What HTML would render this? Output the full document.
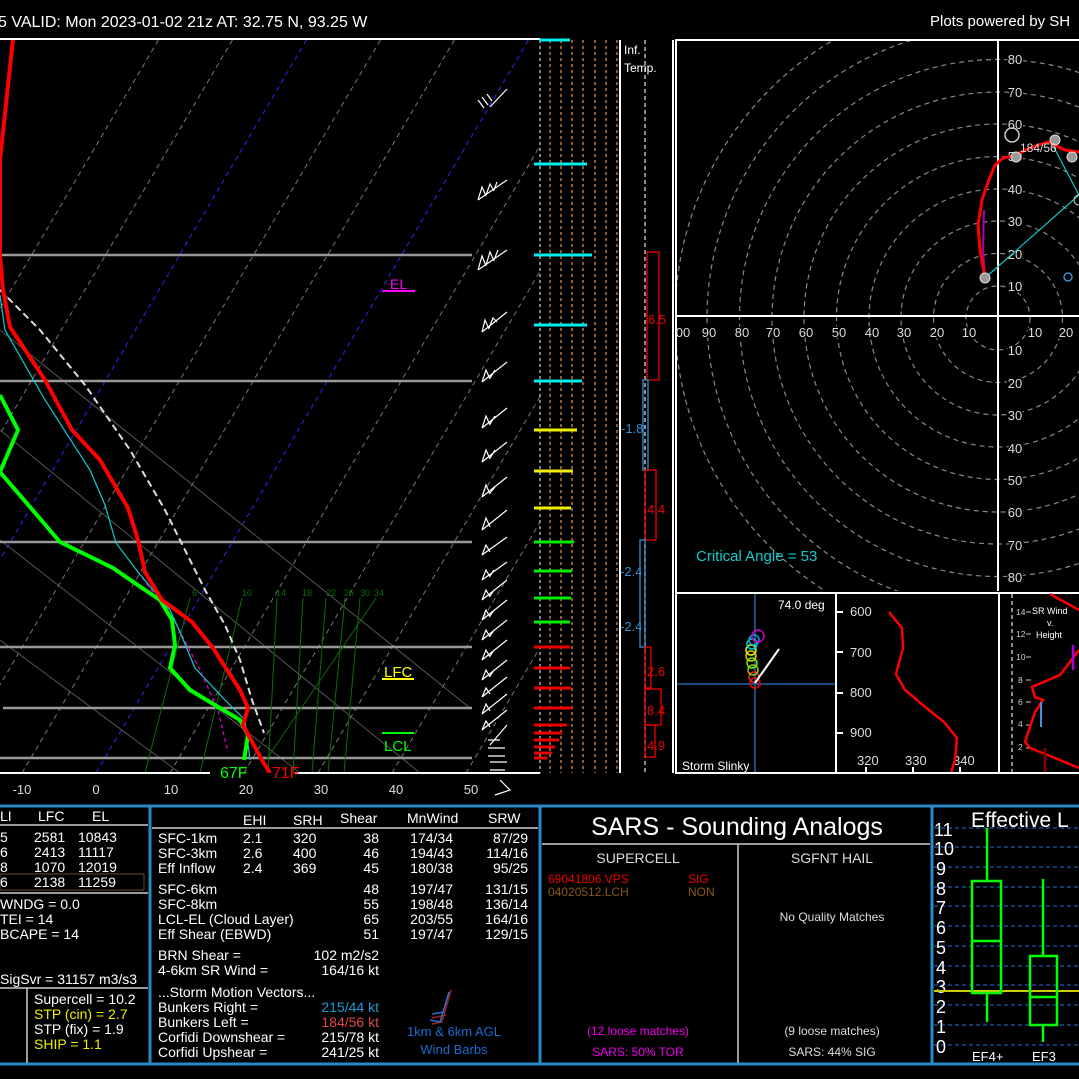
<!DOCTYPE html>
<html><head><meta charset="utf-8"><style>
body{margin:0;background:#000;}
svg{display:block;font-family:"Liberation Sans",sans-serif;}
</style></head><body>
<svg width="1079" height="1079" viewBox="0 0 1079 1079" xmlns="http://www.w3.org/2000/svg">
<rect width="1079" height="1079" fill="#000"/>
<!-- header -->
<text x="-2" y="27" fill="#fff" font-size="16">5  VALID: Mon 2023-01-02 21z  AT: 32.75 N, 93.25 W</text>
<text x="930" y="26" fill="#fff" font-size="15">Plots powered by SH</text>

<!-- SKEW-T -->
<defs><clipPath id="sk"><rect x="0" y="40" width="540" height="733"/></clipPath>
<clipPath id="hd"><rect x="677" y="40" width="402" height="551"/></clipPath></defs>
<g clip-path="url(#sk)">
<g stroke="#777" stroke-width="1" stroke-dasharray="5,4" fill="none">
<line x1="-274" y1="773" x2="159" y2="39"/>
<line x1="-200" y1="773" x2="233" y2="39"/>
<line x1="-52" y1="773" x2="381" y2="39"/>
<line x1="22" y1="773" x2="455" y2="39"/>
<line x1="170" y1="773" x2="603" y2="39"/>
<line x1="244" y1="773" x2="677" y2="39"/>
<line x1="318" y1="773" x2="751" y2="39"/>
<line x1="392" y1="773" x2="825" y2="39"/>
<line x1="466" y1="773" x2="899" y2="39"/>
</g>
<g stroke="#2222cc" stroke-width="1.2" stroke-dasharray="5,4" fill="none">
<line x1="-126" y1="773" x2="307" y2="39"/>
<line x1="96" y1="773" x2="529" y2="39"/>
</g>
<g stroke="#555" stroke-width="1" fill="none">
<line x1="0" y1="430" x2="420" y2="773"/>
<line x1="0" y1="540" x2="300" y2="773"/>
<line x1="0" y1="640" x2="180" y2="773"/>
<line x1="0" y1="330" x2="470" y2="708"/>
</g>
<g stroke="#999" stroke-width="2.5">
<line x1="0" y1="255" x2="472" y2="255"/>
<line x1="0" y1="381" x2="472" y2="381"/>
<line x1="0" y1="542" x2="472" y2="542"/>
<line x1="0" y1="647" x2="472" y2="647"/>
<line x1="3" y1="708" x2="472" y2="708"/>
<line x1="0" y1="758" x2="472" y2="758"/>
</g>
<g stroke="#0c6c0c" stroke-width="1" fill="none">
<line x1="145" y1="773" x2="190" y2="598"/>
<line x1="200" y1="773" x2="242" y2="598"/>
<line x1="268" y1="773" x2="277" y2="598"/>
<line x1="293" y1="773" x2="303" y2="598"/>
<line x1="312" y1="773" x2="326" y2="598"/>
<line x1="328" y1="773" x2="345" y2="598"/>
<line x1="344" y1="773" x2="360" y2="598"/>
<line x1="266" y1="760" x2="376" y2="598"/>
</g>
<g fill="#0c6c0c" font-size="9">
<text x="192" y="596">6</text><text x="242" y="596">10</text><text x="276" y="596">14</text><text x="302" y="596">18</text><text x="326" y="596">22</text><text x="344" y="596">26</text><text x="360" y="596">30</text><text x="374" y="596">34</text>
</g>
<polyline fill="none" stroke="#c0c" stroke-width="1.3" stroke-dasharray="4,3" points="138,572 175,622 200,670 218,710 228,752"/>
<polyline fill="none" stroke="#ddd" stroke-width="2" stroke-dasharray="7,4" points="0,290 40,330 85,385 130,450 165,510 180,540 205,590 225,625 240,660 252,700 264,733"/>
<polyline fill="none" stroke="#1cc" stroke-width="1.2" points="0,295 5,330 45,400 90,470 105,505 116,543 138,572 170,610 180,632 195,668 225,700 245,720 250,760"/>
<polyline fill="none" stroke="#0f0" stroke-width="4" points="0,395 18,430 0,472 60,542 113,568 145,590 160,600 172,620 175,645 170,668 190,690 240,720 248,735 244,760"/>
<polyline fill="none" stroke="#f00" stroke-width="4" points="13,39 0,160 0,255 3,290 10,327 45,380 72,430 100,460 128,508 138,540 145,572 162,600 192,622 213,648 240,690 248,708 243,725 250,738 262,760 270,773"/>
</g>
<line x1="0" y1="39" x2="540" y2="39" stroke="#fff" stroke-width="2"/>
<line x1="0" y1="773" x2="210" y2="773" stroke="#fff" stroke-width="2"/>
<line x1="295" y1="773" x2="540" y2="773" stroke="#fff" stroke-width="2"/>
<text x="220" y="778" fill="#0f0" font-size="16">67F</text>
<text x="272" y="778" fill="#f00" font-size="16">71F</text>
<g fill="#ddd" font-size="13" text-anchor="middle">
<text x="22" y="794">-10</text><text x="96" y="794">0</text><text x="171" y="794">10</text><text x="246" y="794">20</text><text x="321" y="794">30</text><text x="396" y="794">40</text><text x="471" y="794">50</text>
</g>
<line x1="382" y1="291" x2="415" y2="291" stroke="#f0f" stroke-width="2"/><text x="390" y="289" fill="#f0f" font-size="14">EL</text>
<line x1="382" y1="679" x2="414" y2="679" stroke="#ff0" stroke-width="2"/><text x="384" y="677" fill="#ff0" font-size="15">LFC</text>
<line x1="382" y1="733" x2="414" y2="733" stroke="#0f0" stroke-width="2"/><text x="384" y="751" fill="#0f0" font-size="15">LCL</text>
<!-- wind barbs -->
<g stroke="#fff" stroke-width="1.2" fill="none">
<path d="M490,107 L507,89 M478,100 L484,108 M482,97 L488,105 M487,94 L492,101"/>
<path d="M478,200 L507,180 M478,200 L482,187 L486,196 M486,195 L490,184 L494,191 M494,190 L497,182"/>
<path d="M478,270 L507,250 M478,270 L482,256 L486,266 M486,265 L490,252 L494,261 M494,260 L498,250"/>
<path d="M482,332 L507,312 M482,332 L485,320 L489,329 M489,328 L493,318 L497,322"/>
<path d="M482,382 L507,362 M482,382 L486,370 L490,379 M490,378 L495,370"/>
<path d="M482,428 L507,408 M482,428 L486,416 L490,425 M490,424 L495,416"/>
<path d="M482,462 L507,442 M482,462 L486,450 L490,459 M490,458 L495,450"/>
<path d="M482,497 L507,477 M482,497 L486,485 L490,494 M490,493 L495,487"/>
<path d="M482,530 L507,510 M482,530 L486,518 L490,527"/>
<path d="M482,555 L507,537 M482,555 L486,545 L490,552"/>
<path d="M482,580 L507,562 M482,580 L486,570 L490,577 M490,576 L494,570"/>
<path d="M482,600 L507,580 M482,600 L486,590 L490,597 M490,596 L494,590"/>
<path d="M482,620 L507,600 M482,620 L486,610 L490,617 M490,616 L494,610"/>
<path d="M482,640 L507,620 M482,640 L486,630 L490,637 M490,636 L494,630"/>
<path d="M482,660 L507,640 M482,660 L486,650 L490,657 M490,656 L494,650"/>
<path d="M482,680 L507,660 M482,680 L486,670 L490,677 M490,676 L494,670"/>
<path d="M482,697 L507,677 M482,697 L486,688 L490,694"/>
<path d="M482,714 L507,694 M482,714 L486,704 L490,711"/>
<path d="M482,730 L507,710 M482,730 L486,721 L490,727"/>
<path d="M490,745 L507,725 M488,740 L500,740 M488,748 L505,748 M488,756 L505,756 M490,762 L507,762 M490,770 L505,770 M500,780 L510,790 L495,795"/>
</g>

<!-- dotted column -->
<g stroke="#8a5a30" stroke-width="2" stroke-dasharray="3,3">
<line x1="550" y1="40" x2="550" y2="773"/><line x1="561" y1="40" x2="561" y2="773"/><line x1="572" y1="40" x2="572" y2="773"/><line x1="583" y1="40" x2="583" y2="773"/><line x1="595" y1="40" x2="595" y2="773"/><line x1="606" y1="40" x2="606" y2="773"/><line x1="617" y1="40" x2="617" y2="773"/>
</g>
<line x1="540" y1="40" x2="540" y2="773" stroke="#fff" stroke-width="1" stroke-dasharray="3,3"/>
<g stroke-width="3">
<line x1="540" y1="40" x2="570" y2="40" stroke="#0ee"/>
<line x1="534" y1="164" x2="587" y2="164" stroke="#0ee"/>
<line x1="534" y1="255" x2="592" y2="255" stroke="#0ee"/>
<line x1="534" y1="325" x2="587" y2="325" stroke="#0ee"/>
<line x1="534" y1="381" x2="582" y2="381" stroke="#0ee"/>
<line x1="534" y1="430" x2="577" y2="430" stroke="#ee0"/>
<line x1="534" y1="471" x2="573" y2="471" stroke="#ee0"/>
<line x1="534" y1="508" x2="571" y2="508" stroke="#ee0"/>
<line x1="534" y1="542" x2="574" y2="542" stroke="#0e0"/>
<line x1="534" y1="571" x2="572" y2="571" stroke="#0e0"/>
<line x1="534" y1="598" x2="571" y2="598" stroke="#0e0"/>
<line x1="534" y1="622" x2="570" y2="622" stroke="#0e0"/>
<line x1="534" y1="647" x2="570" y2="647" stroke="#e00"/>
<line x1="534" y1="668" x2="570" y2="668" stroke="#e00"/>
<line x1="534" y1="688" x2="571" y2="688" stroke="#e00"/>
<line x1="534" y1="708" x2="572" y2="708" stroke="#e00"/>
<line x1="534" y1="725" x2="567" y2="725" stroke="#e00"/>
<line x1="534" y1="733" x2="562" y2="733" stroke="#e00"/>
<line x1="534" y1="740" x2="559" y2="740" stroke="#e00"/>
<line x1="534" y1="747" x2="555" y2="747" stroke="#e00"/>
<line x1="534" y1="753" x2="552" y2="753" stroke="#e00"/>
<line x1="534" y1="758" x2="547" y2="758" stroke="#e00"/>
</g>
<!-- inf temp -->
<line x1="620" y1="40" x2="620" y2="773" stroke="#fff" stroke-width="2"/>
<line x1="673" y1="40" x2="673" y2="773" stroke="#fff" stroke-width="2"/>
<line x1="645" y1="40" x2="645" y2="773" stroke="#bbb" stroke-width="1.5" stroke-dasharray="4,3"/>
<text x="624" y="54" fill="#fff" font-size="12">Inf.</text><text x="624" y="72" fill="#fff" font-size="12">Temp.</text>
<g fill="none" stroke-width="1.3">
<rect x="647" y="252" width="12" height="128" stroke="#e00"/>
<rect x="643" y="380" width="5" height="90" stroke="#3390d0"/>
<rect x="645" y="470" width="11" height="70" stroke="#e00"/>
<rect x="640" y="540" width="5" height="107" stroke="#3390d0"/>
<rect x="645" y="647" width="6" height="41" stroke="#e00"/>
<rect x="645" y="689" width="16" height="36" stroke="#e00"/>
<rect x="645" y="725" width="10" height="32" stroke="#e00"/>
</g>
<g font-size="13">
<text x="648" y="324" fill="#e00">6.5</text>
<text x="621" y="433" fill="#3390d0">-1.8</text>
<text x="647" y="514" fill="#e00">4.4</text>
<text x="620" y="576" fill="#3390d0">-2.4</text>
<text x="620" y="631" fill="#3390d0">-2.4</text>
<text x="647" y="676" fill="#e00">2.6</text>
<text x="647" y="715" fill="#e00">8.4</text>
<text x="647" y="750" fill="#e00">4.9</text>
</g>

<!-- HODOGRAPH -->
<g clip-path="url(#hd)">
<g fill="none" stroke="#888" stroke-width="1.2" stroke-dasharray="5,4">
<circle cx="998" cy="318" r="32"/><circle cx="998" cy="318" r="64.5"/><circle cx="998" cy="318" r="97"/><circle cx="998" cy="318" r="129"/><circle cx="998" cy="318" r="161.5"/><circle cx="998" cy="318" r="194"/><circle cx="998" cy="318" r="226"/><circle cx="998" cy="318" r="258.5"/><circle cx="998" cy="318" r="291"/><circle cx="998" cy="318" r="323"/>
</g>
<line x1="998" y1="40" x2="998" y2="592" stroke="#fff" stroke-width="2"/>
<line x1="677" y1="316" x2="1079" y2="316" stroke="#fff" stroke-width="2"/>
<g fill="#ddd" font-size="13" text-anchor="middle" stroke="#000" stroke-width="3" paint-order="stroke">
<text x="683" y="337">00</text><text x="709" y="337">90</text><text x="742" y="337">80</text><text x="773" y="337">70</text><text x="806" y="337">60</text><text x="839" y="337">50</text><text x="872" y="337">40</text><text x="904" y="337">30</text><text x="937" y="337">20</text><text x="969" y="337">10</text><text x="1035" y="337">10</text><text x="1066" y="337">20</text>
<text x="1015" y="64">80</text><text x="1015" y="97">70</text><text x="1015" y="129">60</text><text x="1015" y="161">50</text><text x="1015" y="194">40</text><text x="1015" y="226">30</text><text x="1015" y="259">20</text><text x="1015" y="291">10</text>
<text x="1015" y="355">10</text><text x="1015" y="388">20</text><text x="1015" y="420">30</text><text x="1015" y="453">40</text><text x="1015" y="485">50</text><text x="1015" y="517">60</text><text x="1015" y="550">70</text><text x="1015" y="582">80</text>
</g>
<polyline fill="none" stroke="#1cc" stroke-width="1.2" points="985,278 1079,195"/>
<polyline fill="none" stroke="#1cc" stroke-width="1.2" points="1050,140 1079,195"/>
<polyline fill="none" stroke="#a0a" stroke-width="2" points="985,278 983,250 984,210"/>
<polyline fill="none" stroke="#f00" stroke-width="3" points="985,278 980,250 978,225 982,200 987,185 995,165 1003,158 1013,156 1030,148 1048,142 1065,150 1079,152"/>
<circle cx="985" cy="278" r="5" fill="#999" stroke="#ddd"/>
<circle cx="1016" cy="157" r="5" fill="#999" stroke="#ddd"/>
<circle cx="1012" cy="135" r="7" fill="none" stroke="#ccc" stroke-width="1.5"/>
<circle cx="1055" cy="140" r="5" fill="#999" stroke="#ddd"/>
<circle cx="1072" cy="157" r="5" fill="#999" stroke="#ddd"/>
<circle cx="1079" cy="200" r="5" fill="none" stroke="#ccc"/>
<circle cx="1068" cy="277" r="4" fill="none" stroke="#3390d0" stroke-width="1.5"/>
<text x="1020" y="152" fill="#ddd" font-size="12">184/56</text>
<text x="696" y="561" fill="#1cc" font-size="15">Critical Angle = 53</text>
</g>
<line x1="675" y1="40" x2="1079" y2="40" stroke="#fff" stroke-width="2"/>
<line x1="675" y1="593" x2="1079" y2="593" stroke="#fff" stroke-width="2"/>
<line x1="676" y1="40" x2="676" y2="773" stroke="#fff" stroke-width="2"/>
<!-- slinky -->
<line x1="755" y1="594" x2="755" y2="773" stroke="#1a4a80" stroke-width="2"/>
<line x1="677" y1="684" x2="835" y2="684" stroke="#1a4a80" stroke-width="2"/>
<text x="778" y="609" fill="#fff" font-size="12">74.0 deg</text>
<text x="682" y="770" fill="#fff" font-size="12">Storm Slinky</text>
<g fill="none" stroke-width="1.5">
<circle cx="755" cy="683" r="5" stroke="#e00"/><circle cx="754" cy="677" r="5" stroke="#e22"/><circle cx="753" cy="670" r="5" stroke="#a0c000"/><circle cx="752" cy="663" r="5" stroke="#6e0"/><circle cx="751" cy="656" r="5" stroke="#cc0"/><circle cx="751" cy="650" r="5" stroke="#ee0"/><circle cx="752" cy="644" r="5" stroke="#0cc"/><circle cx="754" cy="640" r="5" stroke="#0ad"/><circle cx="758" cy="636" r="6" stroke="#c0c"/>
</g>
<line x1="755" y1="683" x2="779" y2="649" stroke="#fff" stroke-width="2"/>
<line x1="836" y1="594" x2="836" y2="773" stroke="#fff" stroke-width="2"/>
<!-- theta-e -->
<g fill="#ddd" font-size="13">
<text x="850" y="616">600</text><text x="850" y="657">700</text><text x="850" y="697">800</text><text x="850" y="737">900</text>
<text x="857" y="765">320</text><text x="905" y="765">330</text><text x="953" y="765">340</text>
</g>
<g stroke="#fff" stroke-width="2"><line x1="836" y1="612" x2="843" y2="612"/><line x1="836" y1="652" x2="843" y2="652"/><line x1="836" y1="693" x2="843" y2="693"/><line x1="836" y1="733" x2="843" y2="733"/>
<line x1="866" y1="767" x2="866" y2="773"/><line x1="913" y1="767" x2="913" y2="773"/><line x1="960" y1="767" x2="960" y2="773"/></g>
<polyline fill="none" stroke="#f00" stroke-width="2.5" points="889,612 902,628 903,648 896,674 905,690 924,706 944,722 957,738 955,760 951,773"/>
<line x1="999" y1="594" x2="999" y2="773" stroke="#fff" stroke-width="2"/>
<!-- SR wind -->
<line x1="1012" y1="594" x2="1012" y2="773" stroke="#bbb" stroke-width="1.5" stroke-dasharray="4,3"/>
<g fill="#ccc" font-size="8.5"><text x="1016" y="615">14</text><text x="1016" y="637">12</text><text x="1016" y="660">10</text><text x="1018" y="683">8</text><text x="1018" y="705">6</text><text x="1018" y="727">4</text><text x="1018" y="750">2</text></g>
<g stroke="#ccc"><line x1="1026" y1="612" x2="1031" y2="612"/><line x1="1026" y1="634" x2="1031" y2="634"/><line x1="1026" y1="657" x2="1031" y2="657"/><line x1="1026" y1="680" x2="1031" y2="680"/><line x1="1026" y1="702" x2="1031" y2="702"/><line x1="1026" y1="725" x2="1031" y2="725"/><line x1="1026" y1="748" x2="1031" y2="748"/></g>
<text x="1032" y="614" fill="#fff" font-size="9">SR Wind</text><text x="1047" y="626" fill="#fff" font-size="9">v.</text><text x="1036" y="638" fill="#fff" font-size="9">Height</text>
<polyline fill="none" stroke="#f00" stroke-width="2.5" points="1050,594 1079,610"/>
<polyline fill="none" stroke="#f00" stroke-width="2.5" points="1079,650 1060,675 1032,687 1035,697 1043,700 1035,712 1025,742 1030,748 1055,758 1079,768"/>
<line x1="1073" y1="645" x2="1073" y2="670" stroke="#a0d" stroke-width="2.5"/>
<line x1="1041" y1="702" x2="1041" y2="727" stroke="#4a90e0" stroke-width="2"/>
<line x1="1045" y1="748" x2="1045" y2="773" stroke="#800" stroke-width="2.5"/>
<line x1="675" y1="773" x2="1079" y2="773" stroke="#fff" stroke-width="2"/>

<!-- BOTTOM PANELS -->
<g fill="none" stroke="#2a8ac8" stroke-width="3">
<line x1="0" y1="806" x2="1079" y2="806"/>
<line x1="0" y1="1064" x2="1079" y2="1064"/>
<line x1="150" y1="806" x2="150" y2="1064"/>
<line x1="540" y1="806" x2="540" y2="1064"/>
<line x1="932" y1="806" x2="932" y2="1064"/>
</g>
<g font-size="14" fill="#fff">
<text x="0" y="821">LI</text><text x="38" y="821">LFC</text><text x="92" y="821">EL</text>
<text x="0" y="842">5</text><text x="34" y="842">2581</text><text x="78" y="842">10843</text>
<text x="0" y="857">6</text><text x="34" y="857">2413</text><text x="78" y="857">11117</text>
<text x="0" y="872">8</text><text x="34" y="872">1070</text><text x="78" y="872">12019</text>
<text x="0" y="887">6</text><text x="34" y="887">2138</text><text x="78" y="887">11259</text>
<text x="0" y="909">WNDG = 0.0</text><text x="0" y="924">TEI = 14</text><text x="0" y="939">BCAPE = 14</text>
<text x="0" y="984">SigSvr = 31157 m3/s3</text>
<text x="34" y="1004">Supercell = 10.2</text>
<text x="34" y="1019" fill="#ee0">STP (cin) = 2.7</text>
<text x="34" y="1034">STP (fix) = 1.9</text>
<text x="34" y="1049" fill="#ee0">SHIP = 1.1</text>
</g>
<line x1="0" y1="825" x2="148" y2="825" stroke="#ccc" stroke-width="1.5"/>
<rect x="0" y="874" width="144" height="16" fill="none" stroke="#6a4a2a" stroke-width="1"/>
<line x1="0" y1="893" x2="148" y2="893" stroke="#ccc" stroke-width="1.5"/>
<line x1="0" y1="988" x2="148" y2="988" stroke="#ccc" stroke-width="1.5"/>
<line x1="27" y1="988" x2="27" y2="1063" stroke="#ccc" stroke-width="1.5"/>

<line x1="152" y1="828" x2="538" y2="828" stroke="#ccc" stroke-width="1.5"/>
<g font-size="14" fill="#fff">
<text x="243" y="825">EHI</text><text x="293" y="825">SRH</text><text x="340" y="823">Shear</text><text x="407" y="823">MnWind</text><text x="488" y="823">SRW</text>
<text x="158" y="843">SFC-1km</text><text x="158" y="858">SFC-3km</text><text x="158" y="873">Eff Inflow</text>
<text x="158" y="894">SFC-6km</text><text x="158" y="909">SFC-8km</text><text x="158" y="924">LCL-EL (Cloud Layer)</text><text x="158" y="939">Eff Shear (EBWD)</text>
<text x="158" y="960">BRN Shear =</text><text x="158" y="975">4-6km SR Wind =</text>
<text x="158" y="997">...Storm Motion Vectors...</text>
<text x="158" y="1012">Bunkers Right =</text><text x="158" y="1027">Bunkers Left =</text><text x="158" y="1042">Corfidi Downshear =</text><text x="158" y="1057">Corfidi Upshear =</text>
<text x="243" y="843">2.1</text><text x="243" y="858">2.6</text><text x="243" y="873">2.4</text>
<text x="293" y="843">320</text><text x="293" y="858">400</text><text x="293" y="873">369</text>
</g>
<g font-size="14" fill="#fff" text-anchor="end">
<text x="379" y="843">38</text><text x="379" y="858">46</text><text x="379" y="873">45</text><text x="379" y="894">48</text><text x="379" y="909">55</text><text x="379" y="924">65</text><text x="379" y="939">51</text>
<text x="453" y="843">174/34</text><text x="453" y="858">194/43</text><text x="453" y="873">180/38</text><text x="453" y="894">197/47</text><text x="453" y="909">198/48</text><text x="453" y="924">203/55</text><text x="453" y="939">197/47</text>
<text x="528" y="843">87/29</text><text x="528" y="858">114/16</text><text x="528" y="873">95/25</text><text x="528" y="894">131/15</text><text x="528" y="909">136/14</text><text x="528" y="924">164/16</text><text x="528" y="939">129/15</text>
<text x="379" y="960">102 m2/s2</text><text x="379" y="975">164/16 kt</text>
<text x="379" y="1012" fill="#1a9ad8">215/44 kt</text><text x="379" y="1027" fill="#e04848">184/56 kt</text><text x="379" y="1042">215/78 kt</text><text x="379" y="1057">241/25 kt</text>
</g>
<g stroke-width="1.5" fill="none"><path d="M451,990 L442,1022 L432,1024 M446,1015 L432,1018" stroke="#a02020"/><path d="M449,992 L440,1022 L430,1020 M444,1012 L432,1014" stroke="#2a70d0"/></g>
<text x="454" y="1036" fill="#1a6ad0" font-size="13" text-anchor="middle">1km &amp; 6km AGL</text>
<text x="454" y="1054" fill="#1a6ad0" font-size="13" text-anchor="middle">Wind Barbs</text>

<text x="737" y="835" fill="#fff" font-size="25" text-anchor="middle">SARS - Sounding Analogs</text>
<line x1="542" y1="844" x2="930" y2="844" stroke="#ccc" stroke-width="1.5"/>
<line x1="738" y1="844" x2="738" y2="1063" stroke="#ccc" stroke-width="1.5"/>
<g font-size="14" text-anchor="middle" fill="#ddd">
<text x="638" y="863">SUPERCELL</text><text x="832" y="863">SGFNT HAIL</text>
</g>
<g font-size="12">
<text x="548" y="883" fill="#e00">69041806.VPS</text><text x="688" y="883" fill="#e00">SIG</text>
<text x="548" y="896" fill="#8a5a10">04020512.LCH</text><text x="688" y="896" fill="#8a5a10">NON</text>
</g>
<g font-size="12" text-anchor="middle">
<text x="832" y="921" fill="#ddd">No Quality Matches</text>
<text x="638" y="1035" fill="#e0e">(12 loose matches)</text><text x="638" y="1056" fill="#e0e">SARS: 50% TOR</text>
<text x="832" y="1035" fill="#ddd">(9 loose matches)</text><text x="832" y="1056" fill="#ddd">SARS: 44% SIG</text>
</g>

<!-- Effective layer -->
<g stroke="#1a4a90" stroke-width="1.5" stroke-dasharray="4,3">
<line x1="934" y1="1045" x2="1079" y2="1045"/><line x1="934" y1="1025" x2="1079" y2="1025"/><line x1="934" y1="1005" x2="1079" y2="1005"/><line x1="934" y1="985" x2="1079" y2="985"/><line x1="934" y1="966" x2="1079" y2="966"/><line x1="934" y1="946" x2="1079" y2="946"/><line x1="934" y1="926" x2="1079" y2="926"/><line x1="934" y1="906" x2="1079" y2="906"/><line x1="934" y1="887" x2="1079" y2="887"/><line x1="934" y1="867" x2="1079" y2="867"/><line x1="934" y1="847" x2="1079" y2="847"/><line x1="934" y1="828" x2="1079" y2="828"/>
</g>
<g fill="#fff" font-size="18">
<text x="936" y="1053">0</text><text x="936" y="1033">1</text><text x="936" y="1013">2</text><text x="936" y="993">3</text><text x="936" y="974">4</text><text x="936" y="954">5</text><text x="936" y="934">6</text><text x="936" y="914">7</text><text x="936" y="895">8</text><text x="936" y="875">9</text><text x="934" y="855">10</text><text x="934" y="836">11</text>
</g>
<text x="971" y="827" fill="#fff" font-size="21">Effective L</text>
<line x1="934" y1="991" x2="1079" y2="991" stroke="#cc0" stroke-width="2"/>
<g fill="none" stroke="#0f0" stroke-width="2.5">
<rect x="972" y="881" width="29" height="112"/><line x1="972" y1="941" x2="1001" y2="941"/><line x1="987" y1="828" x2="987" y2="881"/><line x1="987" y1="993" x2="987" y2="1022"/>
<rect x="1030" y="956" width="27" height="69"/><line x1="1030" y1="997" x2="1057" y2="997"/><line x1="1043" y1="879" x2="1043" y2="956"/><line x1="1043" y1="1025" x2="1043" y2="1042"/>
</g>
<text x="972" y="1061" fill="#fff" font-size="13">EF4+</text><text x="1032" y="1061" fill="#fff" font-size="13">EF3</text>
</svg>
</body></html>
